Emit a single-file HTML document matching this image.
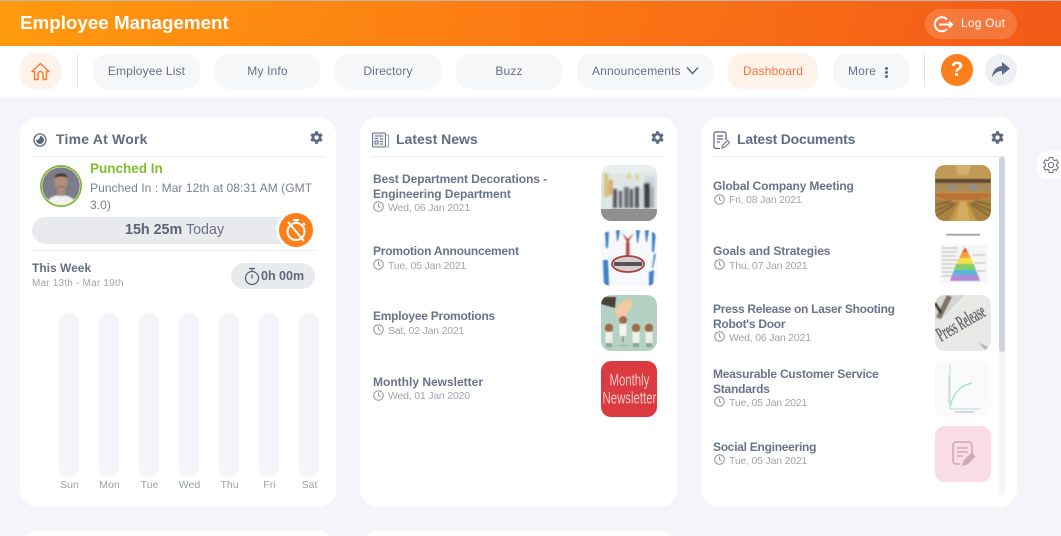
<!DOCTYPE html>
<html><head><meta charset="utf-8"><style>
html,body{margin:0;padding:0;width:1061px;height:536px;overflow:hidden}
body{background:#f4f4fa;font-family:"Liberation Sans",sans-serif;color:#5b6680}
#w{position:absolute;left:0;top:0;width:1061px;height:536px;overflow:hidden;background:#f4f4fa}
.a{position:absolute}
.t{position:absolute;white-space:nowrap}
.hd{background:linear-gradient(96deg,#ff9a0e 0%,#fb7a14 50%,#f25a18 100%);left:0;top:0;width:1061px;height:46px;border-top:1px solid #bdb7ae;box-sizing:border-box}
.nav{left:0;top:46px;width:1061px;height:51px;background:#fff}
.p{position:absolute;top:54px;height:35px;border-radius:14px;background:#f6f7f9;color:#667088;font-size:12px;line-height:35px;text-align:center;letter-spacing:.15px}
.card{position:absolute;background:#fff;border-radius:18px}
.h{font-size:14px;font-weight:bold;color:#626b82;top:130.500px;line-height:17px}
.ln{position:absolute;height:1px;background:#e9e9ee;top:156px}
.n{font-size:12px;font-weight:bold;color:#6a7388;line-height:14.500px;letter-spacing:-.1px}
.d{font-size:10.500px;color:#a0a4ae;line-height:12px;letter-spacing:-.2px}
.bar{position:absolute;top:313px;width:20px;height:164px;border-radius:10px;background:#f4f4fa}
.w{position:absolute;top:479px;width:41px;text-align:center;font-size:10.500px;line-height:12px;color:#9aa0ad}
.th{position:absolute;left:0;top:0;width:56px;height:56px;border-radius:10px;overflow:hidden}
svg{display:block}
</style></head><body><div id="w">
<div class="a hd"></div>
<div class="t" style="left:20px;top:11px;font-size:18.800px;line-height:24px;font-weight:bold;color:#fff">Employee Management</div>
<div class="a" style="left:925px;top:9px;width:92px;height:30px;border-radius:15px;background:rgba(255,255,255,.16)"></div>
<svg class="a" style="left:932px;top:13px" width="22" height="22" viewBox="0 0 22 22" fill="none" stroke="#fff" stroke-width="2"><path d="M15 6.500A7 7 0 1 0 15 16M7 11.500h13M17 8.500l3 3-3 3"/></svg>
<div class="t" style="left:961px;top:16px;font-size:12px;line-height:15px;color:#fff;letter-spacing:.2px">Log Out</div>

<div class="a nav"></div>
<div class="p" style="left:20px;width:41px;background:#fff2e9"></div>
<svg class="a" style="left:30px;top:61px" width="21" height="21" viewBox="0 0 21 21" fill="none" stroke="#fb7d32" stroke-width="1.500" stroke-linejoin="round"><path d="M2 10.500 10.500 2.500l8.500 8h-2.500v8h-3.500v-5.500a2.500 2.500 0 0 0-5 0v5.500H4.500v-8z"/></svg>
<div class="a" style="left:77px;top:54px;width:1px;height:35px;background:#e5e6ea"></div>
<div class="p" style="left:93px;width:107px">Employee List</div>
<div class="p" style="left:215px;width:105px">My Info</div>
<div class="p" style="left:335px;width:106px">Directory</div>
<div class="p" style="left:456px;width:106px">Buzz</div>
<div class="p" style="left:577px;width:136px;text-align:left;text-indent:15px">Announcements</div>
<svg class="a" style="left:686px;top:66px" width="13" height="10" viewBox="0 0 13 10" fill="none" stroke="#5b6b85" stroke-width="1.500"><path d="M1 1.500l5.500 6 5.500-6"/></svg>
<div class="p" style="left:728px;width:90px;background:#fff2e9;color:#fb7340">Dashboard</div>
<div class="p" style="left:833px;width:76px;text-align:left;text-indent:15px">More</div>
<div class="a" style="left:885px;top:67px;width:3px;height:3px;border-radius:2px;background:#5b6b85"></div>
<div class="a" style="left:885px;top:71px;width:3px;height:3px;border-radius:2px;background:#5b6b85"></div>
<div class="a" style="left:885px;top:75px;width:3px;height:3px;border-radius:2px;background:#5b6b85"></div>
<div class="a" style="left:924px;top:54px;width:1px;height:33px;background:#e5e6ea"></div>
<div class="a" style="left:941px;top:54px;width:32px;height:32px;border-radius:50%;background:#fd7f1c;color:#fff;font-weight:bold;font-size:21px;line-height:32px;text-align:center">?</div>
<div class="a" style="left:985px;top:54px;width:32px;height:32px;border-radius:50%;background:#eef0f3"></div>
<svg class="a" style="left:991px;top:61px" width="20" height="18" viewBox="0 0 20 18" fill="#5b6b85"><path d="M11 1l8 6.500-8 6.500v-4C6.500 10 3.500 12 1 16.500 1.500 10 5 5.500 11 5z"/></svg>

<!-- Card 1 -->
<div class="card" style="left:20px;top:117px;width:316px;height:390px"></div>
<svg class="a" style="left:33px;top:133px" width="14" height="14" viewBox="0 0 14 14"><circle cx="7" cy="7" r="6" fill="none" stroke="#5b6680" stroke-width="1.300"/><path d="M7 3A4 4 0 1 1 3 7C5.500 7 7 5.500 7 3z" fill="#5b6680"/></svg>
<div class="t h" style="left:56px;letter-spacing:.2px">Time At Work</div>
<svg class="a" style="left:309px;top:130px" width="15" height="15" viewBox="0 0 24 24" fill="#5b6b85"><path d="M19.400 13a7.500 7.500 0 0 0 0-2l2.400-1.900-2.300-4-2.900 1.100a7.500 7.500 0 0 0-1.700-1L14.400 2h-4.800l-.5 3.200a7.500 7.500 0 0 0-1.700 1L4.500 5.100l-2.300 4L4.600 11a7.500 7.500 0 0 0 0 2l-2.400 1.900 2.300 4 2.900-1.100a7.500 7.500 0 0 0 1.700 1l.5 3.200h4.800l.5-3.200a7.500 7.500 0 0 0 1.700-1l2.900 1.100 2.300-4zM12 15.500a3.500 3.500 0 1 1 0-7 3.500 3.500 0 0 1 0 7z"/></svg>
<div class="ln" style="left:32px;width:292px"></div>
<svg class="a" style="left:40px;top:165px" width="42" height="42" viewBox="0 0 42 42"><defs><clipPath id="cp"><circle cx="21" cy="21" r="18.800"/></clipPath><filter id="bl1"><feGaussianBlur stdDeviation=".8"/></filter></defs><circle cx="21" cy="21" r="21" fill="#79b82c"/><circle cx="21" cy="21" r="19.300" fill="#fff"/><g clip-path="url(#cp)"><rect width="42" height="42" fill="#7c7c8a"/><g filter="url(#bl1)"><path d="M5 42c1-8 8-12 16-12s15 4 17 12z" fill="#f4f2f0"/><rect x="17" y="24" width="8" height="7" fill="#a88a78"/><ellipse cx="21" cy="17" rx="6.500" ry="8.500" fill="#b08e7c"/><path d="M14.500 13c0-6 13-6 13 0-4-2-9-2-13 0z" fill="#3b3638"/><rect x="17" y="21" width="8" height="1.500" fill="#8a6a5a"/></g></g></svg>
<div class="t" style="left:90px;top:160px;font-size:13.500px;line-height:17px;font-weight:bold;color:#7ec02c">Punched In</div>
<div class="t" style="left:90px;top:179.500px;font-size:12px;line-height:17.500px;color:#7b8093;letter-spacing:.07px">Punched In : Mar 12th at 08:31 AM (GMT<br>3.0)</div>
<div class="a" style="left:32px;top:217px;width:262px;height:27px;border-radius:14px;background:#e9eaee"></div>
<div class="t" style="left:125px;top:222px;font-size:14.300px;line-height:17px;color:#6a7285"><b style="color:#5b6377">15h 25m</b> Today</div>
<div class="a" style="left:276px;top:211px;width:38px;height:38px;border-radius:50%;background:#fff"></div>
<div class="a" style="left:279px;top:213px;width:34px;height:34px;border-radius:50%;background:#fd7f1c"></div>
<svg class="a" style="left:284px;top:217px" width="24" height="26" viewBox="0 0 24 26" fill="none" stroke="#fff" stroke-width="2"><circle cx="12" cy="14.500" r="8.500"/><path d="M9 3h6M12 3v3M4 5l16 19M19 6l2 2"/></svg>
<div class="ln" style="left:32px;width:284px;top:250px"></div>
<div class="t" style="left:32px;top:261px;font-size:12px;line-height:14px;font-weight:bold;color:#666f85">This Week</div>
<div class="t" style="left:32px;top:278px;font-size:10px;line-height:12px;color:#a1a4ae;letter-spacing:.2px">Mar 13th - Mar 19th</div>
<div class="a" style="left:231px;top:263px;width:84px;height:26px;border-radius:13px;background:#e9eaee"></div>
<svg class="a" style="left:244px;top:267px" width="16" height="19" viewBox="0 0 16 19" fill="none" stroke="#5b6680" stroke-width="1.300"><circle cx="8" cy="11" r="6.500"/><path d="M5 1.500h6M8 1.500v3M8 7.500v4"/></svg>
<div class="t" style="left:261px;top:269px;font-size:12.500px;line-height:15px;font-weight:bold;color:#5f687c">0h 00m</div>
<div class="bar" style="left:59px"></div><div class="bar" style="left:99px"></div><div class="bar" style="left:139px"></div><div class="bar" style="left:179px"></div><div class="bar" style="left:219px"></div><div class="bar" style="left:259px"></div><div class="bar" style="left:299px"></div>
<div class="w" style="left:49px">Sun</div><div class="w" style="left:89px">Mon</div><div class="w" style="left:129px">Tue</div><div class="w" style="left:169px">Wed</div><div class="w" style="left:209px">Thu</div><div class="w" style="left:249px">Fri</div><div class="w" style="left:289px">Sat</div>

<!-- Card 2 -->
<div class="card" style="left:360px;top:117px;width:317px;height:390px"></div>
<svg class="a" style="left:372px;top:132px" width="17" height="16" viewBox="0 0 17 16" fill="none" stroke="#6b7488" stroke-width="1"><rect x=".5" y="1" width="13" height="14" rx="1" fill="#e9ebef"/><path d="M3 4h8M3 6.500h3M3 9h3v3H3zM8 7h3M8 9.500h3M8 12h3"/><path d="M14 3h2.500v12H14" stroke="#6fb0e0"/></svg>
<div class="t h" style="left:396px">Latest News</div>
<svg class="a" style="left:650px;top:130px" width="15" height="15" viewBox="0 0 24 24" fill="#5b6b85"><path d="M19.400 13a7.500 7.500 0 0 0 0-2l2.400-1.900-2.300-4-2.900 1.100a7.500 7.500 0 0 0-1.700-1L14.400 2h-4.800l-.5 3.200a7.500 7.500 0 0 0-1.700 1L4.500 5.100l-2.300 4L4.600 11a7.500 7.500 0 0 0 0 2l-2.400 1.900 2.300 4 2.900-1.100a7.500 7.500 0 0 0 1.700 1l.5 3.200h4.800l.5-3.200a7.500 7.500 0 0 0 1.700-1l2.900 1.100 2.300-4zM12 15.500a3.500 3.500 0 1 1 0-7 3.500 3.500 0 0 1 0 7z"/></svg>
<div class="ln" style="left:372px;width:292px"></div>

<div class="t n" style="left:373px;top:172px;letter-spacing:-.07px">Best Department Decorations -<br>Engineering Department</div>
<svg class="a" style="left:373px;top:201px" width="11" height="11" viewBox="0 0 11 11" fill="none" stroke="#8e939f"><circle cx="5.500" cy="5.500" r="4.800"/><path d="M5.500 2.500v3l2 1.500"/></svg>
<div class="t d" style="left:388px;top:202px">Wed, 06 Jan 2021</div>
<div class="t n" style="left:373px;top:244px;letter-spacing:-.2px">Promotion Announcement</div>
<svg class="a" style="left:373px;top:259px" width="11" height="11" viewBox="0 0 11 11" fill="none" stroke="#8e939f"><circle cx="5.500" cy="5.500" r="4.800"/><path d="M5.500 2.500v3l2 1.500"/></svg>
<div class="t d" style="left:388px;top:260px">Tue, 05 Jan 2021</div>
<div class="t n" style="left:373px;top:309px;letter-spacing:-.25px">Employee Promotions</div>
<svg class="a" style="left:373px;top:324px" width="11" height="11" viewBox="0 0 11 11" fill="none" stroke="#8e939f"><circle cx="5.500" cy="5.500" r="4.800"/><path d="M5.500 2.500v3l2 1.500"/></svg>
<div class="t d" style="left:388px;top:325px">Sat, 02 Jan 2021</div>
<div class="t n" style="left:373px;top:375px;letter-spacing:0">Monthly Newsletter</div>
<svg class="a" style="left:373px;top:390px" width="11" height="11" viewBox="0 0 11 11" fill="none" stroke="#8e939f"><circle cx="5.500" cy="5.500" r="4.800"/><path d="M5.500 2.500v3l2 1.500"/></svg>
<div class="t d" style="left:388px;top:390px">Wed, 01 Jan 2020</div>

<div class="a" style="left:601px;top:165px;width:56px;height:56px"><div class="th"><svg width="56" height="56"><defs><filter id="b1"><feGaussianBlur stdDeviation="1.100"/></filter></defs><rect width="56" height="56" fill="#dfe7e6"/><g filter="url(#b1)"><rect y="0" width="56" height="8" fill="#e8efee"/><path d="M3 8l4 0 1 24H3z" fill="#cfc47a"/><path d="M8 14l4 2-1 14H8z" fill="#d9a860"/><path d="M28 6l3 8h-5zM36 8l3 6h-5z" fill="#dcd27a"/><rect x="44" y="12" width="10" height="10" fill="#c8d8d8"/><path d="M12 24h4v19h-4zM18 26h3v17h-3z" fill="#55555d"/><path d="M23 22h5v21h-5z" fill="#6f7478"/><path d="M29 24h3v19h-3zM34 22h4v21h-4z" fill="#50505a"/><path d="M39 24h3v19h-3z" fill="#c8d0d4"/><path d="M43 18h6v25h-6z" fill="#3f3f47"/><path d="M50 22h3v21h-3z" fill="#a0a4a8"/></g><rect y="44" width="56" height="12" fill="#8f8f8f"/></svg></div></div>
<div class="a" style="left:601px;top:230px;width:56px;height:56px"><div class="th"><svg width="56" height="56"><defs><filter id="b2"><feGaussianBlur stdDeviation=".7"/></filter></defs><rect width="56" height="56" fill="#f6f8fb"/><g filter="url(#b2)" fill="#3f80c8"><path d="M4 2h4l-1 16H5zM15 0h4l-2 11h-1zM35 0h4l-2 13h-1zM44 0h4l-2 12h-1zM51 2h4l-2 20h-2zM2 30h5l1 26H3zM48 42l5-2-1 16h-4zM53 24l2 0-3 14h-1z"/><rect x="25" y="12" width="3.500" height="15" fill="#b94a45"/><path d="M21 3l5 9h1.500l5-9-5.500 6z" fill="#b94a45"/></g><ellipse cx="27" cy="34" rx="16" ry="8" fill="#d8cccc" stroke="#a9413e" stroke-width="1.800"/><rect x="13" y="32" width="28" height="4" fill="#55555c"/></svg></div></div>
<div class="a" style="left:601px;top:295px;width:56px;height:56px"><div class="th"><svg width="56" height="56"><defs><filter id="b3"><feGaussianBlur stdDeviation=".5"/></filter></defs><rect width="56" height="56" fill="#b4d2c3"/><g filter="url(#b3)"><path d="M0 2h15l-1 11L0 9z" fill="#4b4038"/><path d="M15 13c5-5 11-12 15-8 3 3 0 9-3 12l-3 7h-6c-3-3-4-7-3-11z" fill="#f0c9a0"/><circle cx="22" cy="25" r="4" fill="#9e6a48"/><rect x="18.500" y="29" width="7" height="12" fill="#f4f4ee"/><path d="M22 41v6" stroke="#777" stroke-width="1"/><rect x="18" y="50" width="8" height="1" fill="#93ab9f"/><circle cx="8" cy="33" r="4.200" fill="#9e6a48"/><rect x="4.500" y="37" width="7" height="11" fill="#f0f0e8"/><rect x="5" y="48" width="6" height="4" fill="#8aa498"/><circle cx="35" cy="33" r="4.200" fill="#9e6a48"/><rect x="31.500" y="37" width="7" height="11" fill="#f0f0e8"/><rect x="32" y="48" width="6" height="4" fill="#8aa498"/><circle cx="48" cy="33" r="4.200" fill="#9e6a48"/><rect x="44.500" y="37" width="7" height="11" fill="#f0f0e8"/><rect x="45" y="48" width="6" height="4" fill="#8aa498"/></g></svg></div></div>
<div class="a" style="left:601px;top:361px;width:56px;height:56px"><div class="th" style="background:#db3a40;color:#f6c8c8;font-size:15px;line-height:15.500px;text-align:center;display:flex;align-items:center;justify-content:center"><span style="display:block;flex:none;white-space:nowrap;transform:scale(.76,1.100)">Monthly<br>Newsletter</span></div></div>

<!-- Card 3 -->
<div class="card" style="left:701px;top:117px;width:316px;height:390px"></div>
<svg class="a" style="left:713px;top:131px" width="17" height="19" viewBox="0 0 17 19" fill="none" stroke="#5b6680" stroke-width="1.200"><path d="M7 17.500H3a2 2 0 0 1-2-2V3a2 2 0 0 1 2-2h8a2 2 0 0 1 2 2v6M4 5h6M4 8h6M4 11h3"/><path d="M9 17l1-3 4.500-4.500 2 2L12 16z" stroke="#7b829a"/></svg>
<div class="t h" style="left:737px;letter-spacing:-.2px">Latest Documents</div>
<svg class="a" style="left:990px;top:130px" width="15" height="15" viewBox="0 0 24 24" fill="#5b6b85"><path d="M19.400 13a7.500 7.500 0 0 0 0-2l2.400-1.900-2.300-4-2.900 1.100a7.500 7.500 0 0 0-1.700-1L14.400 2h-4.800l-.5 3.200a7.500 7.500 0 0 0-1.700 1L4.500 5.100l-2.300 4L4.600 11a7.500 7.500 0 0 0 0 2l-2.400 1.900 2.300 4 2.900-1.100a7.500 7.500 0 0 0 1.700 1l.5 3.200h4.800l.5-3.200a7.500 7.500 0 0 0 1.700-1l2.900 1.100 2.300-4zM12 15.500a3.500 3.500 0 1 1 0-7 3.500 3.500 0 0 1 0 7z"/></svg>
<div class="ln" style="left:713px;width:292px"></div>
<div class="a" style="left:999px;top:157px;width:6px;height:338px;background:#f4f4fa"></div>
<div class="a" style="left:999px;top:157px;width:6px;height:195px;background:#ced1de;border-radius:3px"></div>

<div class="t n" style="left:713px;top:179px;letter-spacing:-.15px">Global Company Meeting</div>
<svg class="a" style="left:714px;top:194px" width="11" height="11" viewBox="0 0 11 11" fill="none" stroke="#8e939f"><circle cx="5.500" cy="5.500" r="4.800"/><path d="M5.500 2.500v3l2 1.500"/></svg>
<div class="t d" style="left:729px;top:194px">Fri, 08 Jan 2021</div>
<div class="t n" style="left:713px;top:244px">Goals and Strategies</div>
<svg class="a" style="left:714px;top:259px" width="11" height="11" viewBox="0 0 11 11" fill="none" stroke="#8e939f"><circle cx="5.500" cy="5.500" r="4.800"/><path d="M5.500 2.500v3l2 1.500"/></svg>
<div class="t d" style="left:729px;top:260px">Thu, 07 Jan 2021</div>
<div class="t n" style="left:713px;top:302px;letter-spacing:-.27px">Press Release on Laser Shooting<br>Robot's Door</div>
<svg class="a" style="left:714px;top:331px" width="11" height="11" viewBox="0 0 11 11" fill="none" stroke="#8e939f"><circle cx="5.500" cy="5.500" r="4.800"/><path d="M5.500 2.500v3l2 1.500"/></svg>
<div class="t d" style="left:729px;top:332px">Wed, 06 Jan 2021</div>
<div class="t n" style="left:713px;top:367px;letter-spacing:-.22px">Measurable Customer Service<br>Standards</div>
<svg class="a" style="left:714px;top:396px" width="11" height="11" viewBox="0 0 11 11" fill="none" stroke="#8e939f"><circle cx="5.500" cy="5.500" r="4.800"/><path d="M5.500 2.500v3l2 1.500"/></svg>
<div class="t d" style="left:729px;top:397px">Tue, 05 Jan 2021</div>
<div class="t n" style="left:713px;top:440px;letter-spacing:-.27px">Social Engineering</div>
<svg class="a" style="left:714px;top:454px" width="11" height="11" viewBox="0 0 11 11" fill="none" stroke="#8e939f"><circle cx="5.500" cy="5.500" r="4.800"/><path d="M5.500 2.500v3l2 1.500"/></svg>
<div class="t d" style="left:729px;top:455px">Tue, 05 Jan 2021</div>

<div class="a" style="left:935px;top:165px;width:56px;height:56px"><div class="th"><svg width="56" height="56"><defs><filter id="b4"><feGaussianBlur stdDeviation=".7"/></filter></defs><rect width="56" height="56" fill="#c99a4a"/><g filter="url(#b4)"><rect width="56" height="12" fill="#c09a55"/><path d="M20 0h16l-3 10H23z" fill="#d2b070"/><rect y="14" width="56" height="4" fill="#5a4a35"/><rect y="18" width="56" height="9" fill="#a88b5a"/><rect x="16" y="20" width="3" height="5" fill="#6f93b8"/><rect x="37" y="20" width="3" height="5" fill="#6f93b8"/><path d="M0 28h56v4l-14 3H14L0 32z" fill="#b86f34"/><path d="M0 33l24 4-10 19H0zM56 33l-24 4 10 19h14z" fill="#a9823f"/><path d="M0 40l16-4M0 46l18-8M0 52l20-13M56 40l-16-4M56 46l-18-8M56 52l-20-13" stroke="#6a5230" stroke-width="1.200"/><path d="M25 37h6l4 19H21z" fill="#d2ad60"/></g></svg></div></div>
<div class="a" style="left:935px;top:230px;width:56px;height:56px"><div class="th" style="background:#fff"><svg width="56" height="56"><defs><filter id="b5"><feGaussianBlur stdDeviation=".5"/></filter></defs><rect width="56" height="56" fill="#fff"/><g filter="url(#b5)"><rect x="11" y="4" width="34" height="1.500" fill="#888"/><rect x="5" y="15" width="48" height="38" fill="#f5f5f6"/><path d="M7 18h16M7 22h15M7 26h14M7 30h16M7 34h14M7 38h15M7 42h14M7 46h16M38 25h12M40 33h10M42 41h8" stroke="#b5b5b9"/><path d="M30 17l3 5h-6z" fill="#e0524a"/><path d="M27 22h6l3 6H24z" fill="#f3a23c"/><path d="M24 28h12l3 6H21z" fill="#f2e14b"/><path d="M21 34h18l2 6H19z" fill="#7fcf6a"/><path d="M19 40h22l2 5H17z" fill="#57b8d8"/><path d="M17 45h26l2 6H15z" fill="#b08ad8"/></g></svg></div></div>
<div class="a" style="left:935px;top:295px;width:56px;height:56px"><div class="th"><svg width="56" height="56"><defs><filter id="b6"><feGaussianBlur stdDeviation=".6"/></filter></defs><rect width="56" height="56" fill="#e7e9e6"/><g filter="url(#b6)"><path d="M0 0h14L30 0 6 24 0 26z" fill="#d5d6d2"/><path d="M12 0l5 2L6 24 1 22z" fill="#7d7468"/><path d="M0 8l6 10" stroke="#3f3a35" stroke-width="3"/><path d="M44 48l9 4-3 3z" fill="#b5afa5"/></g><text transform="translate(6 47) rotate(-30) scale(.62 1.400)" font-family="Liberation Serif,serif" font-weight="bold" font-size="15" fill="#6a6d70">Press Release</text></svg></div></div>
<div class="a" style="left:935px;top:361px;width:56px;height:56px"><div class="th" style="background:#fafafa"><svg width="56" height="56" fill="none"><path d="M15 4v44h30" stroke="#a9dcf0" stroke-width="1"/><path d="M15 45C20 28 28 24 37 22" stroke="#9fe6cc" stroke-width="1.500"/><rect x="13" y="14" width="2" height="28" fill="#dcdcdc"/><rect x="20" y="50" width="19" height="2" fill="#d8d8d8"/></svg></div></div>
<div class="a" style="left:935px;top:426px;width:56px;height:56px"><div class="th" style="background:#fadce6"><svg width="56" height="56" fill="none" stroke="#d0a9b5" stroke-width="1.600"><path d="M25 38h-4a3 3 0 0 1-3-3V19a3 3 0 0 1 3-3h13a3 3 0 0 1 3 3v12M22 22h11M22 26h11M22 30h6"/><path d="M28 39l1.500-4.500 7-7 3 3-7 7z" fill="#d0a9b5"/></svg></div></div>

<!-- side tab -->
<div class="a" style="left:1037px;top:151px;width:24px;height:28px;border-radius:10px 0 0 10px;background:#fff"></div>
<svg class="a" style="left:1042px;top:156px" width="18" height="18" viewBox="0 0 24 24" fill="none" stroke="#6b7280" stroke-width="1.400"><circle cx="12" cy="12" r="3.500"/><path d="M19.400 13a7.500 7.500 0 0 0 0-2l2.400-1.900-2.300-4-2.900 1.100a7.500 7.500 0 0 0-1.700-1L14.400 2h-4.800l-.5 3.200a7.500 7.500 0 0 0-1.700 1L4.500 5.100l-2.300 4L4.600 11a7.500 7.500 0 0 0 0 2l-2.400 1.900 2.300 4 2.900-1.100a7.500 7.500 0 0 0 1.700 1l.5 3.200h4.800l.5-3.200a7.500 7.500 0 0 0 1.700-1l2.900 1.100 2.300-4z"/></svg>

<!-- next row -->
<svg class="a" style="left:20px;top:531px" width="316" height="5" viewBox="0 0 316 5"><path d="M5.600 5A18 18 0 0 1 18 0H298A18 18 0 0 1 310.400 5Z" fill="#fff"/></svg>
<svg class="a" style="left:360px;top:531px" width="317" height="5" viewBox="0 0 317 5"><path d="M5.600 5A18 18 0 0 1 18 0H299A18 18 0 0 1 311.400 5Z" fill="#fff"/></svg>
</div></body></html>
